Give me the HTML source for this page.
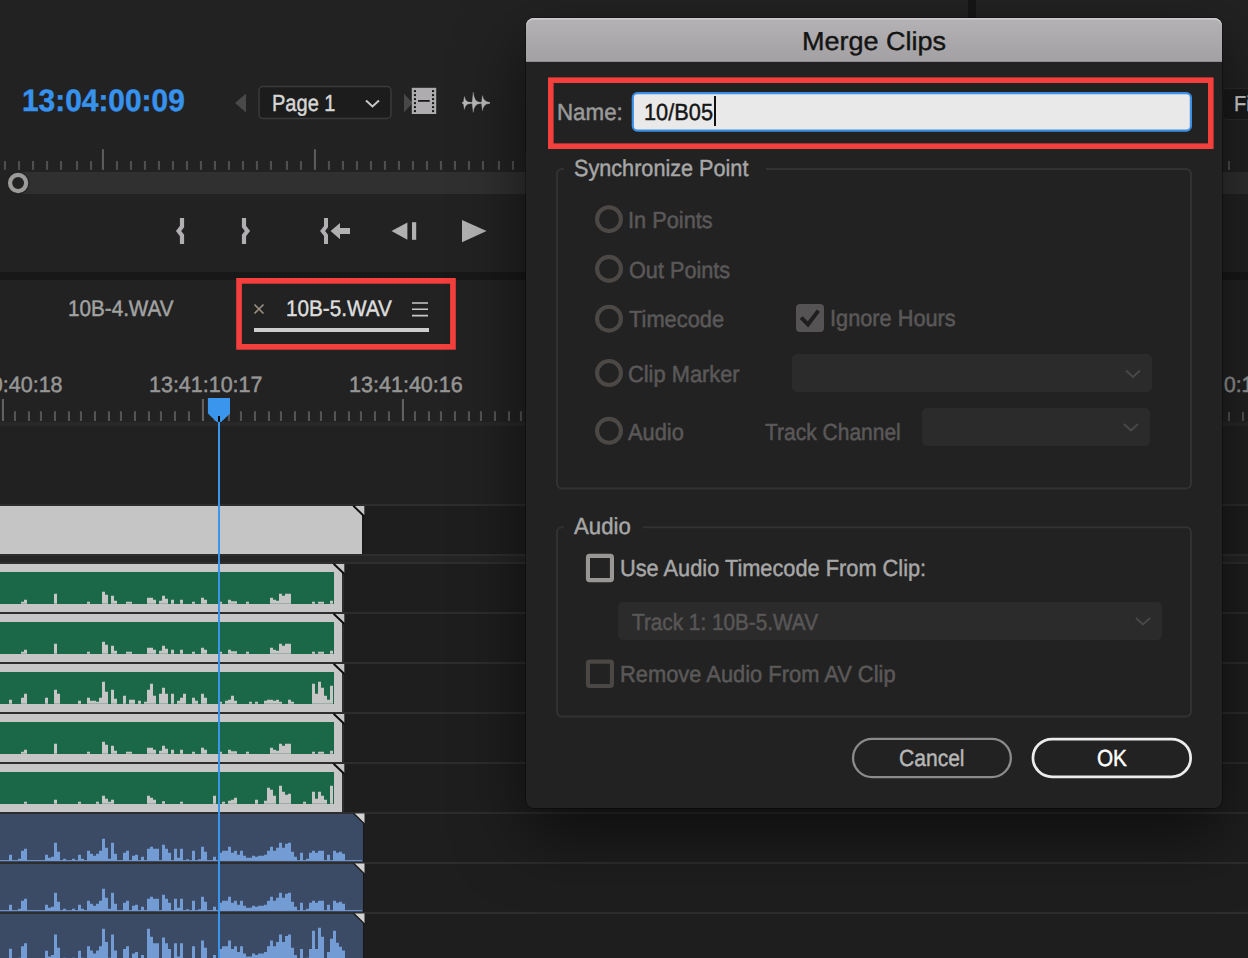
<!DOCTYPE html>
<html><head><meta charset="utf-8"><title>Merge Clips</title><style>
html,body{margin:0;padding:0;}
body{width:1248px;height:958px;overflow:hidden;background:#222222;position:relative;font-family:"Liberation Sans",sans-serif;}
.t{position:absolute;white-space:pre;transform-origin:0 50%;text-rendering:geometricPrecision;}
.r{position:absolute;}
svg{position:absolute;overflow:visible;}
</style></head><body>
<!-- source monitor -->
<div class="t" style="left:22.05px;top:76px;font-size:31px;line-height:49px;color:#3692ec;font-weight:700;-webkit-text-stroke:0.45px #3692ec;transform:scaleX(0.9638);">13:04:00:09</div><svg style="left:0;top:0" width="1248" height="958"><polygon points="235,103 246,93.6 246,112.4" fill="#494949"/><rect x="259" y="86.5" width="132" height="32" rx="4" fill="#1c1c1c" stroke="#3a3a3a" stroke-width="1.5"/><polyline points="366,100.5 372.5,106.5 379,100.5" fill="none" stroke="#c8c8c8" stroke-width="2"/><polygon points="404,93.4 404,112.4 412.5,103" fill="#484848"/><rect x="411.8" y="87.8" width="24.4" height="26.2" fill="#aeacae"/><rect x="413.9" y="90.1" width="2.1" height="2" fill="#1b1b1b"/><rect x="432" y="90.1" width="2.1" height="2" fill="#1b1b1b"/><rect x="413.9" y="94.1" width="2.1" height="2" fill="#1b1b1b"/><rect x="432" y="94.1" width="2.1" height="2" fill="#1b1b1b"/><rect x="413.9" y="98.1" width="2.1" height="2" fill="#1b1b1b"/><rect x="432" y="98.1" width="2.1" height="2" fill="#1b1b1b"/><rect x="413.9" y="102.1" width="2.1" height="2" fill="#1b1b1b"/><rect x="432" y="102.1" width="2.1" height="2" fill="#1b1b1b"/><rect x="413.9" y="106.1" width="2.1" height="2" fill="#1b1b1b"/><rect x="432" y="106.1" width="2.1" height="2" fill="#1b1b1b"/><rect x="413.9" y="110.1" width="2.1" height="2" fill="#1b1b1b"/><rect x="432" y="110.1" width="2.1" height="2" fill="#1b1b1b"/><rect x="418.1" y="100" width="11.6" height="1.8" fill="#1b1b1b"/><path d="M462,102.9 H490" stroke="#b9b7b9" stroke-width="1.5" fill="none"/><path d="M463.29999999999995,102.9 L464.4,96.4 Q465.29999999999995,101.80000000000001 469.9,102.2 L469.9,103.60000000000001 Q465.29999999999995,104.0 464.4,109.4 Z M472.09999999999997,102.9 L473.2,92.2 Q474.09999999999997,101.80000000000001 479.7,102.2 L479.7,103.60000000000001 Q474.09999999999997,104.0 473.2,112.4 Z M481.4,102.9 L482.5,95.6 Q483.4,101.80000000000001 489.0,102.2 L489.0,103.60000000000001 Q483.4,104.0 482.5,110.7 Z " fill="#b9b7b9" stroke="#b9b7b9" stroke-width="0.3" stroke-linejoin="round"/></svg>
<div class="t" style="left:271.75px;top:83px;font-size:23.3px;line-height:40px;color:#d6d6d6;font-weight:400;-webkit-text-stroke:0.45px #d6d6d6;transform:scaleX(0.8601);">Page 1</div><svg style="left:0;top:0" width="1248" height="958"><rect x="3.9" y="161" width="2.1" height="8.8" fill="#504e4e"/><rect x="18.0" y="161" width="2.1" height="8.8" fill="#504e4e"/><rect x="32.0" y="161" width="2.1" height="8.8" fill="#504e4e"/><rect x="46.0" y="161" width="2.1" height="8.8" fill="#504e4e"/><rect x="60.0" y="161" width="2.1" height="8.8" fill="#504e4e"/><rect x="76.0" y="161" width="2.1" height="8.8" fill="#504e4e"/><rect x="90.0" y="161" width="2.1" height="8.8" fill="#504e4e"/><rect x="101.9" y="149.2" width="2.1" height="20.6" fill="#5c5a5a"/><rect x="115.9" y="161" width="2.1" height="8.8" fill="#504e4e"/><rect x="129.9" y="161" width="2.1" height="8.8" fill="#504e4e"/><rect x="143.9" y="161" width="2.1" height="8.8" fill="#504e4e"/><rect x="157.9" y="161" width="2.1" height="8.8" fill="#504e4e"/><rect x="171.9" y="161" width="2.1" height="8.8" fill="#504e4e"/><rect x="185.9" y="161" width="2.1" height="8.8" fill="#504e4e"/><rect x="199.9" y="161" width="2.1" height="8.8" fill="#504e4e"/><rect x="213.9" y="161" width="2.1" height="8.8" fill="#504e4e"/><rect x="227.9" y="161" width="2.1" height="8.8" fill="#504e4e"/><rect x="241.9" y="161" width="2.1" height="8.8" fill="#504e4e"/><rect x="255.9" y="161" width="2.1" height="8.8" fill="#504e4e"/><rect x="269.9" y="161" width="2.1" height="8.8" fill="#504e4e"/><rect x="285.9" y="161" width="2.1" height="8.8" fill="#504e4e"/><rect x="299.9" y="161" width="2.1" height="8.8" fill="#504e4e"/><rect x="313.9" y="149.2" width="2.1" height="20.6" fill="#5c5a5a"/><rect x="327.9" y="161" width="2.1" height="8.8" fill="#504e4e"/><rect x="341.9" y="161" width="2.1" height="8.8" fill="#504e4e"/><rect x="355.9" y="161" width="2.1" height="8.8" fill="#504e4e"/><rect x="369.9" y="161" width="2.1" height="8.8" fill="#504e4e"/><rect x="383.9" y="161" width="2.1" height="8.8" fill="#504e4e"/><rect x="397.9" y="161" width="2.1" height="8.8" fill="#504e4e"/><rect x="411.9" y="161" width="2.1" height="8.8" fill="#504e4e"/><rect x="425.9" y="161" width="2.1" height="8.8" fill="#504e4e"/><rect x="439.9" y="161" width="2.1" height="8.8" fill="#504e4e"/><rect x="453.9" y="161" width="2.1" height="8.8" fill="#504e4e"/><rect x="467.9" y="161" width="2.1" height="8.8" fill="#504e4e"/><rect x="481.9" y="161" width="2.1" height="8.8" fill="#504e4e"/><rect x="497.9" y="161" width="2.1" height="8.8" fill="#504e4e"/><rect x="511.9" y="161" width="2.1" height="8.8" fill="#504e4e"/><rect x="525.9" y="149.2" width="2.1" height="20.6" fill="#5c5a5a"/></svg>
<div class="r" style="left:8px;top:171.8px;width:1240px;height:22.2px;background:#303030;border-radius:11px 0 0 11px;"></div><svg style="left:0;top:0" width="1248" height="958"><circle cx="18.1" cy="183" r="11.2" fill="#222"/><circle cx="18.1" cy="183" r="8.05" fill="#222" stroke="#9d9b9a" stroke-width="4.2"/></svg><svg style="left:0;top:0" width="1248" height="958" fill="#b1b1b1"><path d="M182,218 V226.6 L178.6,231 L182,235.4 V244" fill="none" stroke="#b1afb1" stroke-width="4.2" stroke-linejoin="miter"/><path d="M244,218 V226.6 L247.4,231 L244,235.4 V244" fill="none" stroke="#b1afb1" stroke-width="4.2" stroke-linejoin="miter"/><path d="M326,218 V226.6 L322.6,231 L326,235.4 V244" fill="none" stroke="#b1afb1" stroke-width="4" stroke-linejoin="miter"/><path d="M330.6,231 L340,223 V228 H350 V234 H340 V239.2 Z"/><path d="M391.5,231 L407.4,222.4 V239.7 Z"/><rect x="412" y="222.2" width="4.2" height="17.6"/><path d="M462,220 L486.6,231.1 L462,242.3 Z"/></svg>
<div class="r" style="left:0px;top:272px;width:1248px;height:7.5px;background:#181818;"></div><div class="t" style="left:67.88px;top:288px;font-size:22.7px;line-height:40px;color:#a3a3a3;font-weight:400;-webkit-text-stroke:0.45px #a3a3a3;transform:scaleX(0.9107);">10B-4.WAV</div><div class="t" style="left:286.08px;top:288px;font-size:22.7px;line-height:40px;color:#dedede;font-weight:400;-webkit-text-stroke:0.45px #dedede;transform:scaleX(0.9133);">10B-5.WAV</div><svg style="left:0;top:0" width="1248" height="958"><path d="M254.5,304.5 L263.5,313.5 M263.5,304.5 L254.5,313.5" stroke="#9a8f80" stroke-width="1.6"/><path d="M412,303 H428 M412,309.3 H428 M412,315.6 H428" stroke="#c8c8c8" stroke-width="1.6"/></svg><div class="r" style="left:254px;top:328px;width:175px;height:4px;background:#cdcdcd;"></div><svg style="left:0;top:0" width="1248" height="958"><rect x="239.05" y="280.85" width="213.90" height="66.00" rx="0" fill="none" stroke="#f3403c" stroke-width="5.7"/></svg>
<div class="t" style="left:-51.01px;top:365px;font-size:22px;line-height:39px;color:#969696;font-weight:400;-webkit-text-stroke:0.5px #969696;transform:scaleX(0.9771);">13:40:40:18</div><div class="t" style="left:148.99px;top:365px;font-size:22px;line-height:39px;color:#969696;font-weight:400;-webkit-text-stroke:0.5px #969696;transform:scaleX(0.9762);">13:41:10:17</div><div class="t" style="left:348.79px;top:365px;font-size:22px;line-height:39px;color:#969696;font-weight:400;-webkit-text-stroke:0.5px #969696;transform:scaleX(0.9789);">13:41:40:16</div><div class="r" style="left:0px;top:421.7px;width:1248px;height:4.1px;background:#282828;"></div><svg style="left:0;top:0" width="1248" height="958"><rect x="1.9" y="399" width="2.1" height="22.0" fill="#626060"/><rect x="13.9" y="411.2" width="2.1" height="9.8" fill="#555353"/><rect x="27.9" y="411.2" width="2.1" height="9.8" fill="#555353"/><rect x="39.9" y="411.2" width="2.1" height="9.8" fill="#555353"/><rect x="53.9" y="411.2" width="2.1" height="9.8" fill="#555353"/><rect x="67.9" y="411.2" width="2.1" height="9.8" fill="#555353"/><rect x="79.9" y="411.2" width="2.1" height="9.8" fill="#555353"/><rect x="93.9" y="411.2" width="2.1" height="9.8" fill="#555353"/><rect x="107.9" y="411.2" width="2.1" height="9.8" fill="#555353"/><rect x="119.9" y="411.2" width="2.1" height="9.8" fill="#555353"/><rect x="133.9" y="411.2" width="2.1" height="9.8" fill="#555353"/><rect x="147.9" y="411.2" width="2.1" height="9.8" fill="#555353"/><rect x="159.9" y="411.2" width="2.1" height="9.8" fill="#555353"/><rect x="173.9" y="411.2" width="2.1" height="9.8" fill="#555353"/><rect x="187.9" y="411.2" width="2.1" height="9.8" fill="#555353"/><rect x="201.9" y="399" width="2.1" height="22.0" fill="#626060"/><rect x="213.9" y="411.2" width="2.1" height="9.8" fill="#555353"/><rect x="227.9" y="411.2" width="2.1" height="9.8" fill="#555353"/><rect x="239.9" y="411.2" width="2.1" height="9.8" fill="#555353"/><rect x="253.9" y="411.2" width="2.1" height="9.8" fill="#555353"/><rect x="267.9" y="411.2" width="2.1" height="9.8" fill="#555353"/><rect x="279.9" y="411.2" width="2.1" height="9.8" fill="#555353"/><rect x="293.9" y="411.2" width="2.1" height="9.8" fill="#555353"/><rect x="307.9" y="411.2" width="2.1" height="9.8" fill="#555353"/><rect x="319.9" y="411.2" width="2.1" height="9.8" fill="#555353"/><rect x="333.9" y="411.2" width="2.1" height="9.8" fill="#555353"/><rect x="347.9" y="411.2" width="2.1" height="9.8" fill="#555353"/><rect x="359.9" y="411.2" width="2.1" height="9.8" fill="#555353"/><rect x="373.9" y="411.2" width="2.1" height="9.8" fill="#555353"/><rect x="387.9" y="411.2" width="2.1" height="9.8" fill="#555353"/><rect x="401.9" y="399" width="2.1" height="22.0" fill="#626060"/><rect x="413.9" y="411.2" width="2.1" height="9.8" fill="#555353"/><rect x="427.9" y="411.2" width="2.1" height="9.8" fill="#555353"/><rect x="439.9" y="411.2" width="2.1" height="9.8" fill="#555353"/><rect x="453.9" y="411.2" width="2.1" height="9.8" fill="#555353"/><rect x="467.9" y="411.2" width="2.1" height="9.8" fill="#555353"/><rect x="479.9" y="411.2" width="2.1" height="9.8" fill="#555353"/><rect x="493.9" y="411.2" width="2.1" height="9.8" fill="#555353"/><rect x="507.9" y="411.2" width="2.1" height="9.8" fill="#555353"/><rect x="519.9" y="411.2" width="2.1" height="9.8" fill="#555353"/><path d="M207.9,398 H230 V413.4 L221.2,422 H216.8 L207.9,413.4 Z" fill="#3a95ed"/><rect x="218" y="416" width="2" height="5.8" fill="#0d0d0d"/></svg>
<!-- tracks -->
<div class="r" style="left:0px;top:426px;width:1248px;height:78px;background:#212121;"></div><div class="r" style="left:0px;top:504px;width:1248px;height:454px;background:#1e1e1e;"></div><div class="r" style="left:0px;top:504px;width:1248px;height:2px;background:#2d2d2d;"></div><div class="r" style="left:0px;top:554px;width:1248px;height:10px;background:#252525;"></div><div class="r" style="left:0px;top:554px;width:1248px;height:1.8px;background:#2e2e2e;"></div><div class="r" style="left:0px;top:562px;width:1248px;height:1.8px;background:#2e2e2e;"></div><div class="r" style="left:0px;top:612px;width:1248px;height:2px;background:#2d2d2d;"></div><div class="r" style="left:0px;top:662px;width:1248px;height:2px;background:#2d2d2d;"></div><div class="r" style="left:0px;top:712px;width:1248px;height:2px;background:#2d2d2d;"></div><div class="r" style="left:0px;top:762px;width:1248px;height:2px;background:#2d2d2d;"></div><div class="r" style="left:0px;top:812px;width:1248px;height:2px;background:#2d2d2d;"></div><div class="r" style="left:0px;top:862px;width:1248px;height:2px;background:#2d2d2d;"></div><div class="r" style="left:0px;top:912px;width:1248px;height:2px;background:#2d2d2d;"></div><div class="r" style="left:0px;top:506px;width:362px;height:48px;background:#c5c5c5;"></div><div class="r" style="left:362px;top:506px;width:2px;height:48px;background:#191919;"></div><svg style="left:0;top:0" width="1248" height="958"><polygon points="353,506 364.3,506 364.3,517" fill="#c5c5c5"/><path d="M353.3,505.7 L364.6,516.8" stroke="#0c0c0c" stroke-width="1.9"/></svg><div class="r" style="left:0px;top:564px;width:342.3px;height:47.7px;background:#c6c6c6;"></div><div class="r" style="left:342.3px;top:564px;width:1.7px;height:47.7px;background:#2c2c2c;"></div><div class="r" style="left:0px;top:572.3px;width:334px;height:31.3px;background:#1b6849;"></div><svg style="left:0;top:0" width="1248" height="958"><path d="M21,603.8v-2.0h3v2.0zM24,603.8v-4.0h3v4.0zM54,603.8v-10.0h3v10.0zM87,603.8v-2.0h3v2.0zM102,603.8v-12.0h3v12.0zM105,603.8v-9.0h3v9.0zM111,603.8v-8.0h3v8.0zM114,603.8v-3.0h3v3.0zM126,603.8v-2.0h3v2.0zM129,603.8v-2.0h3v2.0zM147,603.8v-6.0h3v6.0zM150,603.8v-6.0h3v6.0zM153,603.8v-4.0h3v4.0zM159,603.8v-3.0h3v3.0zM162,603.8v-8.0h3v8.0zM165,603.8v-5.0h3v5.0zM171,603.8v-4.0h3v4.0zM180,603.8v-4.0h3v4.0zM192,603.8v-2.0h3v2.0zM201,603.8v-6.0h3v6.0zM204,603.8v-4.0h3v4.0zM219,603.8v-2.0h3v2.0zM228,603.8v-4.0h3v4.0zM231,603.8v-2.5h3v2.5zM234,603.8v-2.5h3v2.5zM246,603.8v-2.0h3v2.0zM270,603.8v-6.0h3v6.0zM273,603.8v-4.0h3v4.0zM276,603.8v-3.0h3v3.0zM279,603.8v-10.0h3v10.0zM282,603.8v-8.0h3v8.0zM285,603.8v-10.0h3v10.0zM288,603.8v-10.0h3v10.0zM312,603.8v-2.0h3v2.0zM318,603.8v-2.0h3v2.0zM321,603.8v-2.0h3v2.0zM330,603.8v-3.0h3v3.0z" fill="#c6c6c6"/><polygon points="333.5,564 344.3,564 344.3,574" fill="#c6c6c6"/><path d="M333.6,563.7 L344.4,574" stroke="#0c0c0c" stroke-width="1.9"/></svg><div class="r" style="left:0px;top:614px;width:342.3px;height:47.7px;background:#c6c6c6;"></div><div class="r" style="left:342.3px;top:614px;width:1.7px;height:47.7px;background:#2c2c2c;"></div><div class="r" style="left:0px;top:622.3px;width:334px;height:31.3px;background:#1b6849;"></div><svg style="left:0;top:0" width="1248" height="958"><path d="M21,653.8v-2.0h3v2.0zM24,653.8v-4.0h3v4.0zM54,653.8v-10.0h3v10.0zM87,653.8v-2.0h3v2.0zM102,653.8v-12.0h3v12.0zM105,653.8v-9.0h3v9.0zM111,653.8v-8.0h3v8.0zM114,653.8v-3.0h3v3.0zM126,653.8v-2.0h3v2.0zM129,653.8v-2.0h3v2.0zM147,653.8v-6.0h3v6.0zM150,653.8v-6.0h3v6.0zM153,653.8v-4.0h3v4.0zM159,653.8v-3.0h3v3.0zM162,653.8v-8.0h3v8.0zM165,653.8v-5.0h3v5.0zM171,653.8v-4.0h3v4.0zM180,653.8v-4.0h3v4.0zM192,653.8v-2.0h3v2.0zM201,653.8v-6.0h3v6.0zM204,653.8v-4.0h3v4.0zM219,653.8v-2.0h3v2.0zM228,653.8v-4.0h3v4.0zM231,653.8v-2.5h3v2.5zM234,653.8v-2.5h3v2.5zM246,653.8v-2.0h3v2.0zM270,653.8v-6.0h3v6.0zM273,653.8v-4.0h3v4.0zM276,653.8v-3.0h3v3.0zM279,653.8v-10.0h3v10.0zM282,653.8v-8.0h3v8.0zM285,653.8v-10.0h3v10.0zM288,653.8v-10.0h3v10.0zM312,653.8v-2.0h3v2.0zM318,653.8v-2.0h3v2.0zM321,653.8v-2.0h3v2.0zM330,653.8v-3.0h3v3.0z" fill="#c6c6c6"/><polygon points="333.5,614 344.3,614 344.3,624" fill="#c6c6c6"/><path d="M333.6,613.7 L344.4,624" stroke="#0c0c0c" stroke-width="1.9"/></svg><div class="r" style="left:0px;top:664px;width:342.3px;height:47.7px;background:#c6c6c6;"></div><div class="r" style="left:342.3px;top:664px;width:1.7px;height:47.7px;background:#2c2c2c;"></div><div class="r" style="left:0px;top:672.3px;width:334px;height:31.3px;background:#1b6849;"></div><svg style="left:0;top:0" width="1248" height="958"><path d="M9,703.8v-4.0h3v4.0zM21,703.8v-6.0h3v6.0zM24,703.8v-10.0h3v10.0zM45,703.8v-6.0h3v6.0zM54,703.8v-14.0h3v14.0zM57,703.8v-10.0h3v10.0zM78,703.8v-3.0h3v3.0zM87,703.8v-6.0h3v6.0zM90,703.8v-3.0h3v3.0zM93,703.8v-3.0h3v3.0zM96,703.8v-2.0h3v2.0zM99,703.8v-6.0h3v6.0zM102,703.8v-22.0h3v22.0zM105,703.8v-12.0h3v12.0zM111,703.8v-14.0h3v14.0zM114,703.8v-5.0h3v5.0zM123,703.8v-8.0h3v8.0zM129,703.8v-4.0h3v4.0zM132,703.8v-4.0h3v4.0zM138,703.8v-3.0h3v3.0zM144,703.8v-2.0h3v2.0zM147,703.8v-14.0h3v14.0zM150,703.8v-20.0h3v20.0zM153,703.8v-8.0h3v8.0zM159,703.8v-10.0h3v10.0zM162,703.8v-16.0h3v16.0zM165,703.8v-10.0h3v10.0zM171,703.8v-10.0h3v10.0zM177,703.8v-3.0h3v3.0zM180,703.8v-6.0h3v6.0zM183,703.8v-10.0h3v10.0zM192,703.8v-6.0h3v6.0zM195,703.8v-3.0h3v3.0zM201,703.8v-10.0h3v10.0zM204,703.8v-6.0h3v6.0zM219,703.8v-2.0h3v2.0zM225,703.8v-3.0h3v3.0zM228,703.8v-4.0h3v4.0zM231,703.8v-8.0h3v8.0zM234,703.8v-3.0h3v3.0zM249,703.8v-2.0h3v2.0zM255,703.8v-2.0h3v2.0zM264,703.8v-3.0h3v3.0zM267,703.8v-4.0h3v4.0zM270,703.8v-4.0h3v4.0zM273,703.8v-3.0h3v3.0zM276,703.8v-4.0h3v4.0zM279,703.8v-2.0h3v2.0zM288,703.8v-4.0h3v4.0zM291,703.8v-2.0h3v2.0zM312,703.8v-20.0h3v20.0zM315,703.8v-10.0h3v10.0zM318,703.8v-22.0h3v22.0zM321,703.8v-16.0h3v16.0zM324,703.8v-8.0h3v8.0zM327,703.8v-4.0h3v4.0zM330,703.8v-18.0h3v18.0z" fill="#c6c6c6"/><polygon points="333.5,664 344.3,664 344.3,674" fill="#c6c6c6"/><path d="M333.6,663.7 L344.4,674" stroke="#0c0c0c" stroke-width="1.9"/></svg><div class="r" style="left:0px;top:714px;width:342.3px;height:47.7px;background:#c6c6c6;"></div><div class="r" style="left:342.3px;top:714px;width:1.7px;height:47.7px;background:#2c2c2c;"></div><div class="r" style="left:0px;top:722.3px;width:334px;height:31.3px;background:#1b6849;"></div><svg style="left:0;top:0" width="1248" height="958"><path d="M21,753.8v-2.0h3v2.0zM24,753.8v-4.0h3v4.0zM54,753.8v-10.0h3v10.0zM87,753.8v-2.0h3v2.0zM102,753.8v-12.0h3v12.0zM105,753.8v-9.0h3v9.0zM111,753.8v-8.0h3v8.0zM114,753.8v-3.0h3v3.0zM126,753.8v-2.0h3v2.0zM129,753.8v-2.0h3v2.0zM147,753.8v-6.0h3v6.0zM150,753.8v-6.0h3v6.0zM153,753.8v-4.0h3v4.0zM159,753.8v-3.0h3v3.0zM162,753.8v-8.0h3v8.0zM165,753.8v-5.0h3v5.0zM171,753.8v-4.0h3v4.0zM180,753.8v-4.0h3v4.0zM192,753.8v-2.0h3v2.0zM201,753.8v-6.0h3v6.0zM204,753.8v-4.0h3v4.0zM219,753.8v-2.0h3v2.0zM228,753.8v-4.0h3v4.0zM231,753.8v-2.5h3v2.5zM234,753.8v-2.5h3v2.5zM246,753.8v-2.0h3v2.0zM270,753.8v-6.0h3v6.0zM273,753.8v-4.0h3v4.0zM276,753.8v-3.0h3v3.0zM279,753.8v-10.0h3v10.0zM282,753.8v-8.0h3v8.0zM285,753.8v-10.0h3v10.0zM288,753.8v-10.0h3v10.0zM312,753.8v-2.0h3v2.0zM318,753.8v-2.0h3v2.0zM321,753.8v-2.0h3v2.0zM330,753.8v-3.0h3v3.0z" fill="#c6c6c6"/><polygon points="333.5,714 344.3,714 344.3,724" fill="#c6c6c6"/><path d="M333.6,713.7 L344.4,724" stroke="#0c0c0c" stroke-width="1.9"/></svg><div class="r" style="left:0px;top:764px;width:342.3px;height:47.7px;background:#c6c6c6;"></div><div class="r" style="left:342.3px;top:764px;width:1.7px;height:47.7px;background:#2c2c2c;"></div><div class="r" style="left:0px;top:772.3px;width:334px;height:31.3px;background:#1b6849;"></div><svg style="left:0;top:0" width="1248" height="958"><path d="M24,803.8v-2.0h3v2.0zM54,803.8v-4.0h3v4.0zM78,803.8v-2.0h3v2.0zM96,803.8v-2.0h3v2.0zM102,803.8v-8.0h3v8.0zM105,803.8v-5.0h3v5.0zM108,803.8v-2.0h3v2.0zM111,803.8v-4.0h3v4.0zM147,803.8v-8.0h3v8.0zM150,803.8v-6.0h3v6.0zM153,803.8v-4.0h3v4.0zM162,803.8v-2.5h3v2.5zM180,803.8v-2.0h3v2.0zM213,803.8v-8.0h3v8.0zM222,803.8v-2.0h3v2.0zM228,803.8v-3.0h3v3.0zM231,803.8v-4.0h3v4.0zM234,803.8v-6.0h3v6.0zM255,803.8v-4.0h3v4.0zM264,803.8v-3.0h3v3.0zM267,803.8v-16.0h3v16.0zM270,803.8v-14.0h3v14.0zM273,803.8v-8.0h3v8.0zM279,803.8v-18.0h3v18.0zM282,803.8v-12.0h3v12.0zM285,803.8v-9.0h3v9.0zM288,803.8v-10.0h3v10.0zM303,803.8v-2.0h3v2.0zM312,803.8v-12.0h3v12.0zM315,803.8v-5.0h3v5.0zM318,803.8v-12.0h3v12.0zM321,803.8v-8.0h3v8.0zM324,803.8v-4.0h3v4.0zM330,803.8v-18.0h3v18.0z" fill="#c6c6c6"/><polygon points="333.5,764 344.3,764 344.3,774" fill="#c6c6c6"/><path d="M333.6,763.7 L344.4,774" stroke="#0c0c0c" stroke-width="1.9"/></svg><div class="r" style="left:0px;top:813.5px;width:363px;height:48.3px;background:#3b4b66;"></div><div class="r" style="left:363px;top:813.5px;width:1.3px;height:48.3px;background:#171717;"></div><div class="r" style="left:0px;top:860.1px;width:361.5px;height:1.4px;background:#6d90c6;"></div><svg style="left:0;top:0" width="1248" height="958"><path d="M9,860.7v-6.0h3v6.0zM18,860.7v-2.0h3v2.0zM21,860.7v-10.0h3v10.0zM24,860.7v-12.0h3v12.0zM45,860.7v-6.0h3v6.0zM48,860.7v-3.0h3v3.0zM51,860.7v-4.0h3v4.0zM54,860.7v-18.0h3v18.0zM57,860.7v-9.0h3v9.0zM63,860.7v-2.0h3v2.0zM72,860.7v-2.0h3v2.0zM78,860.7v-6.0h3v6.0zM81,860.7v-2.0h3v2.0zM87,860.7v-10.0h3v10.0zM90,860.7v-7.0h3v7.0zM93,860.7v-5.0h3v5.0zM96,860.7v-7.0h3v7.0zM99,860.7v-10.0h3v10.0zM102,860.7v-22.0h3v22.0zM105,860.7v-13.0h3v13.0zM108,860.7v-2.0h3v2.0zM111,860.7v-18.0h3v18.0zM114,860.7v-7.0h3v7.0zM123,860.7v-8.0h3v8.0zM126,860.7v-10.0h3v10.0zM132,860.7v-5.0h3v5.0zM135,860.7v-6.0h3v6.0zM141,860.7v-4.0h3v4.0zM147,860.7v-12.0h3v12.0zM150,860.7v-14.0h3v14.0zM153,860.7v-12.0h3v12.0zM156,860.7v-12.0h3v12.0zM162,860.7v-16.0h3v16.0zM165,860.7v-12.0h3v12.0zM168,860.7v-8.0h3v8.0zM174,860.7v-12.0h3v12.0zM177,860.7v-3.0h3v3.0zM180,860.7v-12.0h3v12.0zM186,860.7v-1.5h3v1.5zM192,860.7v-10.0h3v10.0zM198,860.7v-1.5h3v1.5zM201,860.7v-14.0h3v14.0zM204,860.7v-9.0h3v9.0zM213,860.7v-4.0h3v4.0zM219,860.7v-8.0h3v8.0zM222,860.7v-10.0h3v10.0zM225,860.7v-10.0h3v10.0zM228,860.7v-14.0h3v14.0zM231,860.7v-8.0h3v8.0zM234,860.7v-10.0h3v10.0zM237,860.7v-6.0h3v6.0zM240,860.7v-10.0h3v10.0zM243,860.7v-5.0h3v5.0zM246,860.7v-3.0h3v3.0zM249,860.7v-3.0h3v3.0zM252,860.7v-5.0h3v5.0zM255,860.7v-4.0h3v4.0zM258,860.7v-5.0h3v5.0zM261,860.7v-5.0h3v5.0zM264,860.7v-6.0h3v6.0zM267,860.7v-10.0h3v10.0zM270,860.7v-14.0h3v14.0zM273,860.7v-10.0h3v10.0zM276,860.7v-13.0h3v13.0zM279,860.7v-18.0h3v18.0zM282,860.7v-13.0h3v13.0zM285,860.7v-17.0h3v17.0zM288,860.7v-18.0h3v18.0zM291,860.7v-9.0h3v9.0zM294,860.7v-4.0h3v4.0zM300,860.7v-8.0h3v8.0zM306,860.7v-2.0h3v2.0zM309,860.7v-8.0h3v8.0zM312,860.7v-10.0h3v10.0zM315,860.7v-8.0h3v8.0zM318,860.7v-10.0h3v10.0zM321,860.7v-10.0h3v10.0zM327,860.7v-6.0h3v6.0zM333,860.7v-10.0h3v10.0zM336,860.7v-8.0h3v8.0zM339,860.7v-9.0h3v9.0zM342,860.7v-7.0h3v7.0z" fill="#739bd4"/><polygon points="354,813.5 364.5,813.5 364.5,824.0" fill="#d2d2d2"/><path d="M353.5,813.2 L364.8,824.3" stroke="#1a1a1a" stroke-width="1.4"/></svg><div class="r" style="left:0px;top:863.5px;width:363px;height:48.3px;background:#3b4b66;"></div><div class="r" style="left:363px;top:863.5px;width:1.3px;height:48.3px;background:#171717;"></div><div class="r" style="left:0px;top:910.1px;width:361.5px;height:1.4px;background:#6d90c6;"></div><svg style="left:0;top:0" width="1248" height="958"><path d="M9,910.7v-6.0h3v6.0zM18,910.7v-2.0h3v2.0zM21,910.7v-10.0h3v10.0zM24,910.7v-12.0h3v12.0zM45,910.7v-6.0h3v6.0zM48,910.7v-3.0h3v3.0zM51,910.7v-4.0h3v4.0zM54,910.7v-18.0h3v18.0zM57,910.7v-9.0h3v9.0zM63,910.7v-2.0h3v2.0zM72,910.7v-2.0h3v2.0zM78,910.7v-6.0h3v6.0zM81,910.7v-2.0h3v2.0zM87,910.7v-10.0h3v10.0zM90,910.7v-7.0h3v7.0zM93,910.7v-5.0h3v5.0zM96,910.7v-7.0h3v7.0zM99,910.7v-10.0h3v10.0zM102,910.7v-22.0h3v22.0zM105,910.7v-13.0h3v13.0zM108,910.7v-2.0h3v2.0zM111,910.7v-18.0h3v18.0zM114,910.7v-7.0h3v7.0zM123,910.7v-8.0h3v8.0zM126,910.7v-10.0h3v10.0zM132,910.7v-5.0h3v5.0zM135,910.7v-6.0h3v6.0zM141,910.7v-4.0h3v4.0zM147,910.7v-12.0h3v12.0zM150,910.7v-14.0h3v14.0zM153,910.7v-12.0h3v12.0zM156,910.7v-12.0h3v12.0zM162,910.7v-16.0h3v16.0zM165,910.7v-12.0h3v12.0zM168,910.7v-8.0h3v8.0zM174,910.7v-12.0h3v12.0zM177,910.7v-3.0h3v3.0zM180,910.7v-12.0h3v12.0zM186,910.7v-1.5h3v1.5zM192,910.7v-10.0h3v10.0zM198,910.7v-1.5h3v1.5zM201,910.7v-14.0h3v14.0zM204,910.7v-9.0h3v9.0zM213,910.7v-4.0h3v4.0zM219,910.7v-8.0h3v8.0zM222,910.7v-10.0h3v10.0zM225,910.7v-10.0h3v10.0zM228,910.7v-14.0h3v14.0zM231,910.7v-8.0h3v8.0zM234,910.7v-10.0h3v10.0zM237,910.7v-6.0h3v6.0zM240,910.7v-10.0h3v10.0zM243,910.7v-5.0h3v5.0zM246,910.7v-3.0h3v3.0zM249,910.7v-3.0h3v3.0zM252,910.7v-5.0h3v5.0zM255,910.7v-4.0h3v4.0zM258,910.7v-5.0h3v5.0zM261,910.7v-5.0h3v5.0zM264,910.7v-6.0h3v6.0zM267,910.7v-10.0h3v10.0zM270,910.7v-14.0h3v14.0zM273,910.7v-10.0h3v10.0zM276,910.7v-13.0h3v13.0zM279,910.7v-18.0h3v18.0zM282,910.7v-13.0h3v13.0zM285,910.7v-17.0h3v17.0zM288,910.7v-18.0h3v18.0zM291,910.7v-9.0h3v9.0zM294,910.7v-4.0h3v4.0zM300,910.7v-8.0h3v8.0zM306,910.7v-2.0h3v2.0zM309,910.7v-8.0h3v8.0zM312,910.7v-10.0h3v10.0zM315,910.7v-8.0h3v8.0zM318,910.7v-10.0h3v10.0zM321,910.7v-10.0h3v10.0zM327,910.7v-6.0h3v6.0zM333,910.7v-10.0h3v10.0zM336,910.7v-8.0h3v8.0zM339,910.7v-9.0h3v9.0zM342,910.7v-7.0h3v7.0z" fill="#739bd4"/><polygon points="354,863.5 364.5,863.5 364.5,874.0" fill="#d2d2d2"/><path d="M353.5,863.2 L364.8,874.3" stroke="#1a1a1a" stroke-width="1.4"/></svg><div class="r" style="left:0px;top:913.5px;width:363px;height:48.3px;background:#3b4b66;"></div><div class="r" style="left:363px;top:913.5px;width:1.3px;height:48.3px;background:#171717;"></div><div class="r" style="left:0px;top:960.1px;width:361.5px;height:1.4px;background:#6d90c6;"></div><svg style="left:0;top:0" width="1248" height="958"><path d="M9,960.7v-12.0h3v12.0zM18,960.7v-2.9h3v2.9zM21,960.7v-14.5h3v14.5zM24,960.7v-17.4h3v17.4zM45,960.7v-10.0h3v10.0zM48,960.7v-4.3h3v4.3zM51,960.7v-5.8h3v5.8zM54,960.7v-26.1h3v26.1zM57,960.7v-13.0h3v13.0zM63,960.7v-2.9h3v2.9zM72,960.7v-2.9h3v2.9zM78,960.7v-10.0h3v10.0zM81,960.7v-2.9h3v2.9zM87,960.7v-14.5h3v14.5zM90,960.7v-10.2h3v10.2zM93,960.7v-7.2h3v7.2zM96,960.7v-10.2h3v10.2zM99,960.7v-14.5h3v14.5zM102,960.7v-31.9h3v31.9zM105,960.7v-18.8h3v18.8zM108,960.7v-2.9h3v2.9zM111,960.7v-26.1h3v26.1zM114,960.7v-10.2h3v10.2zM123,960.7v-11.6h3v11.6zM126,960.7v-14.5h3v14.5zM132,960.7v-7.2h3v7.2zM135,960.7v-8.7h3v8.7zM141,960.7v-5.8h3v5.8zM147,960.7v-32.0h3v32.0zM150,960.7v-24.0h3v24.0zM153,960.7v-17.4h3v17.4zM156,960.7v-17.4h3v17.4zM162,960.7v-23.2h3v23.2zM165,960.7v-17.4h3v17.4zM168,960.7v-11.6h3v11.6zM174,960.7v-17.4h3v17.4zM177,960.7v-4.3h3v4.3zM180,960.7v-17.4h3v17.4zM186,960.7v-2.2h3v2.2zM192,960.7v-14.5h3v14.5zM198,960.7v-2.2h3v2.2zM201,960.7v-20.3h3v20.3zM204,960.7v-13.0h3v13.0zM213,960.7v-5.8h3v5.8zM219,960.7v-11.6h3v11.6zM222,960.7v-14.5h3v14.5zM225,960.7v-14.5h3v14.5zM228,960.7v-20.3h3v20.3zM231,960.7v-11.6h3v11.6zM234,960.7v-14.5h3v14.5zM237,960.7v-8.7h3v8.7zM240,960.7v-14.5h3v14.5zM243,960.7v-7.2h3v7.2zM246,960.7v-4.3h3v4.3zM249,960.7v-4.3h3v4.3zM252,960.7v-7.2h3v7.2zM255,960.7v-5.8h3v5.8zM258,960.7v-7.2h3v7.2zM261,960.7v-7.2h3v7.2zM264,960.7v-8.7h3v8.7zM267,960.7v-14.5h3v14.5zM270,960.7v-20.3h3v20.3zM273,960.7v-14.5h3v14.5zM276,960.7v-18.8h3v18.8zM279,960.7v-26.1h3v26.1zM282,960.7v-18.8h3v18.8zM285,960.7v-24.6h3v24.6zM288,960.7v-26.1h3v26.1zM291,960.7v-13.0h3v13.0zM294,960.7v-5.8h3v5.8zM300,960.7v-11.6h3v11.6zM306,960.7v-2.9h3v2.9zM309,960.7v-11.6h3v11.6zM312,960.7v-30.0h3v30.0zM315,960.7v-11.6h3v11.6zM318,960.7v-33.0h3v33.0zM321,960.7v-24.0h3v24.0zM327,960.7v-8.7h3v8.7zM330,960.7v-22.0h3v22.0zM333,960.7v-30.0h3v30.0zM336,960.7v-18.0h3v18.0zM339,960.7v-14.0h3v14.0zM342,960.7v-10.2h3v10.2z" fill="#739bd4"/><polygon points="354,913.5 364.5,913.5 364.5,924.0" fill="#d2d2d2"/><path d="M353.5,913.2 L364.8,924.3" stroke="#1a1a1a" stroke-width="1.4"/></svg><div class="r" style="left:217.9px;top:421.5px;width:2.3px;height:537px;background:#3a95ed;"></div><div class="r" style="left:968px;top:0px;width:7.5px;height:272px;background:#161616;"></div><div class="r" style="left:1222px;top:87.5px;width:40px;height:30px;background:#1b1b1b;border:1px solid #2c2c2c;border-radius:5px"></div><div class="t" style="left:1233.96px;top:85px;font-size:21.5px;line-height:38px;color:#d8d8d8;font-weight:400;-webkit-text-stroke:0.3px #d8d8d8;transform:scaleX(0.9356);">Fi</div><div class="r" style="left:1228px;top:161px;width:2px;height:8.8px;background:#504e4e;"></div><div class="t" style="left:1223.98px;top:365px;font-size:22px;line-height:39px;color:#969696;font-weight:400;-webkit-text-stroke:0.5px #969696;transform:scaleX(0.9600);">0:1</div><div class="r" style="left:1228px;top:411.5px;width:2px;height:9.5px;background:#555353;"></div><div class="r" style="left:1241.5px;top:411.5px;width:2px;height:9.5px;background:#555353;"></div>
<!-- dialog -->
<div class="r" style="left:526px;top:18px;width:696px;height:790px;border-radius:8px 8px 8px 8px;background:#222222;box-shadow:0 26px 66px 2px rgba(0,0,0,0.54),0 0 0 1px rgba(0,0,0,0.3);"></div><div class="r" style="left:526px;top:18px;width:696px;height:44px;border-radius:8px 8px 0 0;background:linear-gradient(#b4b2b4,#afadaf 30%,#a7a5a7 70%,#a3a1a3);box-shadow:inset 0 1.5px 0 #cfcdcf, inset 0 -1px 0 #8f8d8f"></div><div class="t" style="left:801.77px;top:19px;font-size:26px;line-height:44px;color:#141414;font-weight:400;-webkit-text-stroke:0.4px #141414;transform:scaleX(1.0387);">Merge Clips</div><svg style="left:0;top:0" width="1248" height="958"><rect x="550.80" y="80.20" width="660.00" height="66.00" rx="0" fill="none" stroke="#f3403c" stroke-width="5.6"/></svg><div class="t" style="left:556.98px;top:92px;font-size:23.3px;line-height:40px;color:#9a9a9a;font-weight:400;-webkit-text-stroke:0.5px #9a9a9a;transform:scaleX(0.9581);">Name:</div><svg style="left:0;top:0" width="1248" height="958"><rect x="632.80" y="93.10" width="558.10" height="37.50" rx="4.5" fill="#e9e9e9" stroke="#3b8fe4" stroke-width="2.2"/></svg><div class="t" style="left:644.04px;top:92px;font-size:23.3px;line-height:40px;color:#161616;font-weight:400;-webkit-text-stroke:0.45px #161616;transform:scaleX(0.9345);">10/B05</div><div class="r" style="left:714.3px;top:96px;width:1.6px;height:30px;background:#111;"></div><svg style="left:0;top:0" width="1248" height="958"><rect x="557" y="169" width="634" height="319.5" rx="5" fill="none" stroke="#323232" stroke-width="2"/></svg><div class="r" style="left:563.9000000000001px;top:166px;width:202.5px;height:6px;background:#222222;"></div><div class="t" style="left:573.95px;top:148px;font-size:23.3px;line-height:40px;color:#a7a7a7;font-weight:400;-webkit-text-stroke:0.45px #a7a7a7;transform:scaleX(0.9288);">Synchronize Point</div><svg style="left:0;top:0" width="1248" height="958"><circle cx="609" cy="219.2" r="11.95" fill="none" stroke="#4c4846" stroke-width="4.1"/></svg><div class="t" style="left:627.66px;top:200px;font-size:23.3px;line-height:40px;color:#5a5858;font-weight:400;-webkit-text-stroke:0.55px #5a5858;transform:scaleX(0.9339);">In Points</div><svg style="left:0;top:0" width="1248" height="958"><circle cx="609" cy="268.8" r="11.95" fill="none" stroke="#4c4846" stroke-width="4.1"/></svg><div class="t" style="left:628.59px;top:250px;font-size:23.3px;line-height:40px;color:#5a5858;font-weight:400;-webkit-text-stroke:0.55px #5a5858;transform:scaleX(0.9304);">Out Points</div><svg style="left:0;top:0" width="1248" height="958"><circle cx="609" cy="318.7" r="11.95" fill="none" stroke="#4c4846" stroke-width="4.1"/></svg><div class="t" style="left:628.66px;top:299px;font-size:23.3px;line-height:40px;color:#5a5858;font-weight:400;-webkit-text-stroke:0.55px #5a5858;transform:scaleX(0.9385);">Timecode</div><svg style="left:0;top:0" width="1248" height="958"><circle cx="609" cy="373" r="11.95" fill="none" stroke="#4c4846" stroke-width="4.1"/></svg><div class="t" style="left:628.05px;top:354px;font-size:23.3px;line-height:40px;color:#5a5858;font-weight:400;-webkit-text-stroke:0.55px #5a5858;transform:scaleX(0.9374);">Clip Marker</div><svg style="left:0;top:0" width="1248" height="958"><circle cx="609" cy="430.8" r="11.95" fill="none" stroke="#4c4846" stroke-width="4.1"/></svg><div class="t" style="left:628.43px;top:412px;font-size:23.3px;line-height:40px;color:#5a5858;font-weight:400;-webkit-text-stroke:0.55px #5a5858;transform:scaleX(0.9370);">Audio</div><div class="r" style="left:796px;top:304.3px;width:28px;height:27.4px;border-radius:4px;background:#555353"></div><svg style="left:0;top:0" width="1248" height="958"><path d="M801.2,317.6 L808,324.4 L818.4,310.6" fill="none" stroke="#1f1f1f" stroke-width="4"/></svg><div class="t" style="left:830.06px;top:298px;font-size:23.3px;line-height:40px;color:#5a5858;font-weight:400;-webkit-text-stroke:0.55px #5a5858;transform:scaleX(0.9332);">Ignore Hours</div><div class="r" style="left:792px;top:354.3px;width:360px;height:37.3px;border-radius:5px;background:#2b2b2b"></div><div class="r" style="left:921.7px;top:408px;width:228.7px;height:37.8px;border-radius:5px;background:#2b2b2b"></div><div class="t" style="left:764.67px;top:412px;font-size:23.3px;line-height:40px;color:#5a5858;font-weight:400;-webkit-text-stroke:0.55px #5a5858;transform:scaleX(0.9013);">Track Channel</div><svg style="left:0;top:0" width="1248" height="958" fill="none" stroke="#484848" stroke-width="2"><polyline points="1126,370.5 1133,377 1140,370.5"/><polyline points="1124,424 1131,430.5 1138,424"/></svg><svg style="left:0;top:0" width="1248" height="958"><rect x="557" y="527.3" width="634" height="189.2" rx="5" fill="none" stroke="#323232" stroke-width="2"/></svg><div class="r" style="left:564.0px;top:524.3px;width:78.70000000000005px;height:6px;background:#222222;"></div><div class="t" style="left:574.28px;top:506px;font-size:23.3px;line-height:40px;color:#a7a7a7;font-weight:400;-webkit-text-stroke:0.45px #a7a7a7;transform:scaleX(0.9523);">Audio</div><svg style="left:0;top:0" width="1248" height="958"><rect x="587.95" y="555.85" width="24.00" height="24.30" rx="1.6" fill="none" stroke="#999795" stroke-width="4.1"/></svg><div class="t" style="left:619.84px;top:548px;font-size:23.3px;line-height:40px;color:#a7a7a7;font-weight:400;-webkit-text-stroke:0.45px #a7a7a7;transform:scaleX(0.9345);">Use Audio Timecode From Clip:</div><div class="r" style="left:618px;top:602px;width:544px;height:38px;border-radius:5px;background:#2b2b2b"></div><div class="t" style="left:632.28px;top:602px;font-size:23.3px;line-height:40px;color:#585656;font-weight:400;-webkit-text-stroke:0.55px #585656;transform:scaleX(0.8905);">Track 1: 10B-5.WAV</div><svg style="left:0;top:0" width="1248" height="958" fill="none" stroke="#484848" stroke-width="2"><polyline points="1136,618 1143,624.5 1150,618"/></svg><svg style="left:0;top:0" width="1248" height="958"><rect x="587.95" y="661.65" width="24.00" height="24.30" rx="1.6" fill="none" stroke="#4a4745" stroke-width="4.1"/></svg><div class="t" style="left:619.65px;top:654px;font-size:23.3px;line-height:40px;color:#5a5858;font-weight:400;-webkit-text-stroke:0.55px #5a5858;transform:scaleX(0.9389);">Remove Audio From AV Clip</div><svg style="left:0;top:0" width="1248" height="958"><rect x="853.05" y="738.85" width="157.80" height="38.20" rx="19.2" fill="none" stroke="#8c8a8a" stroke-width="2.3"/></svg><div class="t" style="left:899.15px;top:738px;font-size:23.3px;line-height:40px;color:#b7b7b7;font-weight:400;-webkit-text-stroke:0.45px #b7b7b7;transform:scaleX(0.9039);">Cancel</div><svg style="left:0;top:0" width="1248" height="958"><rect x="1032.95" y="739.05" width="157.70" height="37.80" rx="19.2" fill="none" stroke="#ececec" stroke-width="2.7"/></svg><div class="t" style="left:1096.79px;top:738px;font-size:23.3px;line-height:40px;color:#ffffff;font-weight:400;-webkit-text-stroke:0.45px #ffffff;transform:scaleX(0.8884);">OK</div>
</body></html>
